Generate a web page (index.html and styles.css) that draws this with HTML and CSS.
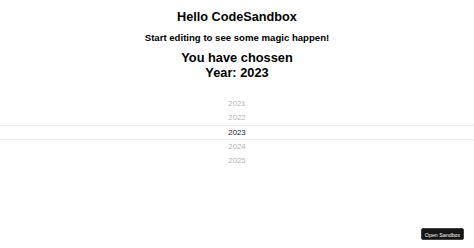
FILE: index.html
```html
<!DOCTYPE html>
<html>
<head>
<meta charset="utf-8">
<link rel="stylesheet" href="styles.css">
</head>
<body>
<div class="app">
  <h1 class="title">Hello CodeSandbox</h1>
  <h2 class="subtitle">Start editing to see some magic happen!</h2>
  <h2 class="chosen">You have chossen<br>Year: 2023</h2>
  <div class="picker">
    <div class="item">2021</div>
    <div class="item">2022</div>
    <div class="item selected">2023</div>
    <div class="item">2024</div>
    <div class="item">2025</div>
  </div>
</div>
<div class="open-btn">Open Sandbox</div>
</body>
</html>
```
FILE: styles.css
```css
html, body {
  margin: 0;
  padding: 0;
  background: #ffffff;
}
body {
  font-family: "Liberation Sans", Arial, sans-serif;
  color: #000;
  height: 248px;
  overflow: hidden;
}
.app {
  text-align: center;
  padding-top: 8.5px;
}
.title {
  margin: 0;
  font-size: 12.7px;
  line-height: 16px;
  font-weight: bold;
}
.subtitle {
  margin: 7.5px 0 0;
  font-size: 9.6px;
  line-height: 11px;
  font-weight: bold;
}
.chosen {
  margin: 8px 0 0;
  font-size: 12.8px;
  line-height: 14.7px;
  font-weight: bold;
}
.picker {
  margin-top: 17px;
  display: flex;
  flex-direction: column;
}
.item {
  height: 14px;
  line-height: 14px;
  font-size: 7.8px;
  color: #b4b4b4;
}
.item.selected {
  color: #222;
  border-top: 1px solid #efefef;
  border-bottom: 1px solid #efefef;
  height: 13px;
  line-height: 13px;
  margin-top: -0.5px;
}
.open-btn {
  position: absolute;
  left: 421px;
  top: 228px;
  width: 43px;
  height: 12px;
  background: #151515;
  color: #fff;
  border-radius: 2px;
  font-size: 5.3px;
  line-height: 12px;
  text-align: center;
  border: 0.5px solid #444;
  box-sizing: border-box;
}
```
